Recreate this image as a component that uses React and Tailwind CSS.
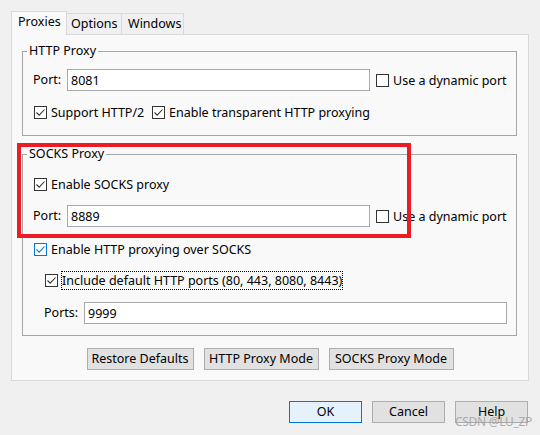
import React from "react";

function Check({ checked = true, blue = false }) {
  return (
    <span
      className={`flex h-[13px] w-[13px] shrink-0 items-center justify-center border bg-white ${
        blue ? "border-[#0078d7]" : "border-[#333333]"
      }`}
    >
      {checked && (
        <svg width="11" height="11" viewBox="0 0 11 11">
          <path
            d="M1.5 5.5 L4.2 8.2 L9.5 2.5"
            fill="none"
            stroke={blue ? "#0078d7" : "#333333"}
            strokeWidth="1.1"
          />
        </svg>
      )}
    </span>
  );
}

function CheckRow({ label, checked = true, blue = false, focused = false, className = "" }) {
  return (
    <label className={`flex h-[22px] items-center gap-[3px] ${className}`}>
      <Check checked={checked} blue={blue} />
      <span
        className={`whitespace-nowrap leading-[17px] ${
          focused ? "border border-dotted border-black" : "px-[1px]"
        }`}
      >
        {label}
      </span>
    </label>
  );
}

function PortInput({ value, className = "" }) {
  return (
    <input
      readOnly
      value={value}
      className={`h-[22px] border border-[#a9a9a9] bg-white px-[3px] text-[12.5px] outline-none ${className}`}
    />
  );
}

function Group({ title, children, className = "" }) {
  return (
    <fieldset className={`w-[495px] border border-[#a6a6a6] ${className}`}>
      <legend className="ml-[4px] px-[2px] leading-[16px]">{title}</legend>
      {children}
    </fieldset>
  );
}

function Button({ children, primary = false, className = "" }) {
  return (
    <button
      type="button"
      className={`flex h-[22px] items-center justify-center border ${
        primary
          ? "border-[#0078d7] bg-[#e5f1fb]"
          : "border-[#adadad] bg-[#e1e1e1]"
      } ${className}`}
    >
      {children}
    </button>
  );
}

export default function App() {
  return (
    <div className="relative h-[435px] w-[540px] bg-[#f0f0f0] pl-[11px] pt-[11px] text-[12.5px] text-black font-['Noto_Sans','Liberation_Sans',sans-serif]">
      <div className="w-[518px]">
        {/* tabs */}
        <div className="flex h-[23px] items-end">
          <div className="relative z-10 -mb-px flex h-[24px] w-[56px] items-start border border-b-0 border-[#d9d9d9] bg-[#f9f9f9] pl-[6px] pt-[2px] leading-[16px]">
            Proxies
          </div>
          <div className="flex h-[21px] w-[55px] items-start border border-b-0 border-l-0 border-[#d9d9d9] pl-[4px] pt-[2px] leading-[16px]">
            Options
          </div>
          <div className="flex h-[21px] w-[62px] items-start border border-b-0 border-l-0 border-[#d9d9d9] pl-[6px] pt-[2px] leading-[16px]">
            Windows
          </div>
        </div>

        {/* panel */}
        <div className="h-[347px] border border-[#d9d9d9] bg-[#f9f9f9] pl-[10px] pt-[8px]">
          <Group title="HTTP Proxy" className="h-[93px]">
            <div className="flex items-center pl-[10px] pt-[10px]">
              <span className="w-[34px]">Port:</span>
              <PortInput value="8081" className="w-[303px]" />
              <div className="ml-[6px]">
                <CheckRow label="Use a dynamic port" checked={false} />
              </div>
            </div>
            <div className="mt-[10px] flex items-center pl-[11px]">
              <CheckRow label="Support HTTP/2" className="w-[118px]" />
              <CheckRow label="Enable transparent HTTP proxying" />
            </div>
          </Group>

          <Group title="SOCKS Proxy" className="mt-[10px] h-[190px]">
            <div className="pl-[11px] pt-[11px]">
              <CheckRow label="Enable SOCKS proxy" />
            </div>
            <div className="mt-[10px] flex items-center pl-[10px]">
              <span className="w-[34px]">Port:</span>
              <PortInput value="8889" className="w-[303px]" />
              <div className="ml-[6px]">
                <CheckRow label="Use a dynamic port" checked={false} />
              </div>
            </div>
            <div className="mt-[11px] pl-[11px]">
              <CheckRow label="Enable HTTP proxying over SOCKS" blue />
            </div>
            <div className="mt-[9px] pl-[22px]">
              <CheckRow
                label="Include default HTTP ports (80, 443, 8080, 8443)"
                focused
              />
            </div>
            <div className="mt-[11px] flex items-center pl-[21px]">
              <span className="w-[40px]">Ports:</span>
              <PortInput value="9999" className="w-[423px]" />
            </div>
          </Group>

          <div className="mt-[12px] flex justify-center gap-[10px] pr-[10px]">
            <Button className="w-[107px]">Restore Defaults</Button>
            <Button className="w-[115px]">HTTP Proxy Mode</Button>
            <Button className="w-[125px]">SOCKS Proxy Mode</Button>
          </div>
        </div>
      </div>

      {/* dialog buttons */}
      <div className="mt-[20px] flex justify-end gap-[10px] pr-[12px]">
        <Button primary className="w-[73px]">OK</Button>
        <Button className="w-[73px]">Cancel</Button>
        <Button className="w-[73px]">Help</Button>
      </div>

      {/* annotation over the SOCKS section */}
      <div className="pointer-events-none absolute left-[17px] top-[143px] h-[95px] w-[394px] border-4 border-[#ec1c24]" />

      {/* watermark */}
      <div className="pointer-events-none absolute left-[455px] top-[413px] text-[12px] tracking-[-0.3px] text-[#9a9a9a]/80">
        CSDN @LU_ZP
      </div>
    </div>
  );
}
